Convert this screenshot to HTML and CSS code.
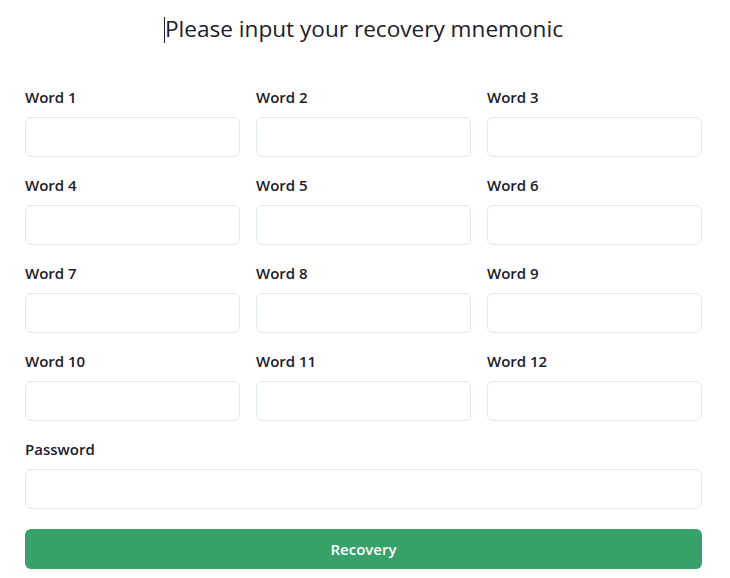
FILE: index.html
```html
<!DOCTYPE html>
<html lang="en">
<head>
<meta charset="utf-8">
<title>Recovery</title>
<link rel="stylesheet" href="styles.css">
</head>
<body>
<div class="page">
  <h1 class="title"><span class="caret"></span>Please input your recovery mnemonic</h1>
  <form class="form">
    <div class="grid">
      <div class="field"><label class="label">Word 1</label><input class="input" type="text"></div>
      <div class="field"><label class="label">Word 2</label><input class="input" type="text"></div>
      <div class="field"><label class="label">Word 3</label><input class="input" type="text"></div>
      <div class="field"><label class="label">Word 4</label><input class="input" type="text"></div>
      <div class="field"><label class="label">Word 5</label><input class="input" type="text"></div>
      <div class="field"><label class="label">Word 6</label><input class="input" type="text"></div>
      <div class="field"><label class="label">Word 7</label><input class="input" type="text"></div>
      <div class="field"><label class="label">Word 8</label><input class="input" type="text"></div>
      <div class="field"><label class="label">Word 9</label><input class="input" type="text"></div>
      <div class="field"><label class="label">Word 10</label><input class="input" type="text"></div>
      <div class="field"><label class="label">Word 11</label><input class="input" type="text"></div>
      <div class="field"><label class="label">Word 12</label><input class="input" type="text"></div>
      <div class="field wide"><label class="label">Password</label><input class="input" type="password"></div>
    </div>
    <button class="button" type="button">Recovery</button>
  </form>
</div>
</body>
</html>
```
FILE: styles.css
```css
* { box-sizing: border-box; }
html, body { margin: 0; padding: 0; background: #ffffff; }
body {
  font-family: "Open Sans", "Noto Sans", "Liberation Sans", sans-serif;
  color: #1a202c;
}
.page {
  width: 677px;
  margin-left: 25px;
  padding-top: 13px;
}
.title {
  margin: 0;
  text-align: center;
  font-size: 22.6px;
  font-weight: 400;
  line-height: 32px;
  height: 32px;
  color: #1a202c;
}
.caret {
  display: inline-block;
  width: 1px;
  height: 26px;
  background: #1a202c;
  vertical-align: -6px;
}
.form {
  margin-top: 40px;
  display: flex;
  flex-direction: column;
  gap: 20px;
}
.grid {
  display: grid;
  grid-template-columns: repeat(3, 1fr);
  gap: 16px;
}
.field {
  display: flex;
  flex-direction: column;
  gap: 8px;
}
.wide { grid-column: 1 / -1; }
.label {
  font-size: 15px;
  font-weight: 600;
  line-height: 24px;
  color: #1a202c;
}
.input {
  height: 40px;
  width: 100%;
  border: 1px solid #e2e8f0;
  border-radius: 6px;
  background: #fff;
  padding: 0 16px;
  font: inherit;
  outline: none;
}
.button {
  height: 40px;
  width: 100%;
  border: none;
  border-radius: 6px;
  background: #38a169;
  color: #ffffff;
  font-family: inherit;
  font-size: 15px;
  font-weight: 600;
}
```
